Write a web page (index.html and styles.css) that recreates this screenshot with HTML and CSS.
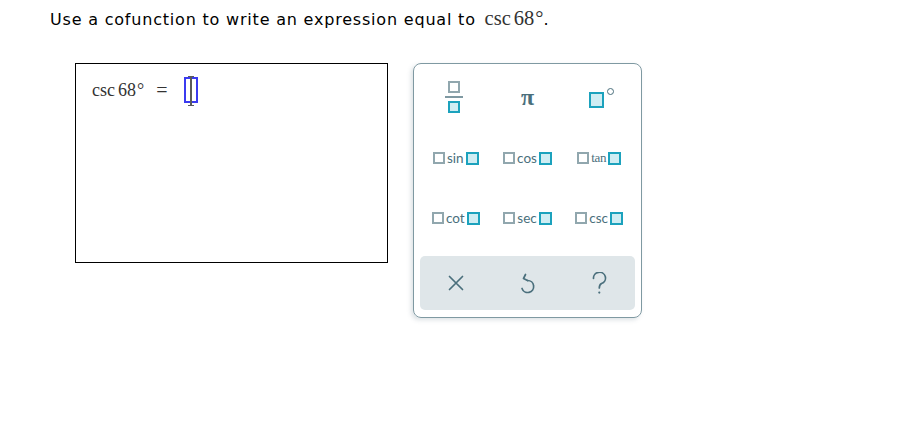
FILE: index.html
```html
<!DOCTYPE html>
<html>
<head>
<meta charset="utf-8">
<link rel="stylesheet" href="styles.css">
</head>
<body>
<div class="question">Use a cofunction to write an expression equal to <span class="math q-math">csc<span class="sp"></span>68<span class="dg">°</span></span>.</div>
<div class="work">
  <div class="answer">
    <div class="expr">
      <span class="math a-math">csc<span class="sp"></span>68<span class="dg">°</span></span>
      <span class="math eq">=</span>
      <span class="cursor-box"><span class="caret"></span></span>
    </div>
  </div>
  <div class="palette">
    <div class="grid">
      <div class="key">
        <span class="frac"><span class="bx gray"></span><span class="bar"></span><span class="bx teal"></span></span>
      </div>
      <div class="key"><span class="pi">π</span></div>
      <div class="key"><span class="deg"><span class="bx teal big"></span><span class="ring"></span></span></div>

      <div class="key"><span class="fn"><span class="bx gray"></span><span class="lbl">sin</span><span class="bx teal"></span></span></div>
      <div class="key"><span class="fn"><span class="bx gray"></span><span class="lbl">cos</span><span class="bx teal"></span></span></div>
      <div class="key"><span class="fn"><span class="bx gray"></span><span class="lbl tan">tan</span><span class="bx teal"></span></span></div>

      <div class="key"><span class="fn"><span class="bx gray"></span><span class="lbl">cot</span><span class="bx teal"></span></span></div>
      <div class="key"><span class="fn"><span class="bx gray"></span><span class="lbl">sec</span><span class="bx teal"></span></span></div>
      <div class="key"><span class="fn"><span class="bx gray"></span><span class="lbl">csc</span><span class="bx teal"></span></span></div>
    </div>
    <div class="actions">
      <span class="act">
        <svg width="16" height="16" viewBox="0 0 16 16"><path d="M1.5 1.5 L14.5 14.5 M14.5 1.5 L1.5 14.5" stroke="#4a6f7c" stroke-width="1.7" fill="none" stroke-linecap="round"/></svg>
      </span>
      <span class="act">
        <svg width="15" height="21" viewBox="0 0 15 21"><path d="M7.5 7.5 A6 6 0 1 1 2 15.5" stroke="#4a6f7c" stroke-width="1.7" fill="none" stroke-linecap="round"/><path d="M5.5 1.5 L3.5 5.5 L7.5 7.5" stroke="#4a6f7c" stroke-width="1.7" fill="none" stroke-linecap="round" stroke-linejoin="round"/></svg>
      </span>
      <span class="act">
        <svg width="15" height="23" viewBox="0 0 15 23"><path d="M1.5 6.5 A6 5.8 0 1 1 9.5 11.5 C8 12.3 7.3 13.5 7.3 16" stroke="#4a6f7c" stroke-width="1.7" fill="none" stroke-linecap="round"/><circle cx="7.3" cy="20.6" r="1.1" fill="#4a6f7c"/></svg>
      </span>
    </div>
  </div>
</div>
</body>
</html>
```
FILE: styles.css
```css
html, body { margin: 0; padding: 0; background: #fff; }
body { width: 913px; height: 444px; overflow: hidden; }

.question {
  font-family: "DejaVu Sans", Verdana, sans-serif;
  font-size: 16px;
  letter-spacing: 0.8px;
  color: #000;
  padding: 7px 0 0 50px;
  height: 27px;
  line-height: 22px;
}
.math {
  font-family: "Liberation Serif", "DejaVu Serif", "Times New Roman", serif;
  letter-spacing: 0;
}
.q-math { font-size: 20.5px; margin-left: 3px; color: #333; }
.sp { display: inline-block; width: 3px; }
.dg { margin-left: 1px; }

.work {
  display: flex;
  align-items: flex-start;
  padding: 29px 0 0 75px;
  gap: 25px;
}

.answer {
  width: 311px;
  height: 198px;
  border: 1px solid #000;
}
.expr {
  display: flex;
  align-items: center;
  padding: 13px 0 0 16px;
}
.a-math { font-size: 18px; color: #333; }
.eq { font-size: 20px; margin: 0 17px 0 12px; color: #333; }
.cursor-box {
  position: relative;
  width: 14px;
  height: 26px;
  border: 2px solid #3b3bf0;
  box-sizing: border-box;
  display: inline-block;
}
.caret {
  position: absolute;
  left: 4px;
  top: -3px;
  width: 2px;
  height: 30px;
  background: #5a5a5a;
}
.caret::before, .caret::after {
  content: "";
  position: absolute;
  left: -2px;
  width: 6px;
  height: 1px;
  background: #5a5a5a;
}
.caret::before { top: 0; }
.caret::after { bottom: 0; }

.palette {
  width: 215px;
  height: 246px;
  border: 1px solid #7f99a2;
  border-radius: 8px;
  box-shadow: -2px 2px 4px rgba(120,140,150,0.25);
  display: flex;
  flex-direction: column;
  padding: 0 6px 7px 6px;
}

.grid {
  display: grid;
  grid-template-columns: repeat(3, 1fr);
  grid-template-rows: 64px 60px 60px;
}
.key {
  display: flex;
  align-items: center;
  justify-content: center;
}

.bx {
  display: inline-block;
  width: 12px;
  height: 12px;
  box-sizing: border-box;
  border: 2px solid;
  flex: none;
}
.bx.gray { border-color: #91a7ae; background: #fff; }
.bx.teal { border-color: #1ca2bd; background: #cfedf3; width: 13px; height: 13px; }
.bx.big { width: 15px; height: 16px; }

.frac {
  display: flex;
  flex-direction: column;
  align-items: center;
  gap: 3px;
  margin-left: -4px;
  margin-top: 2px;
}
.frac .bx.teal { width: 12px; height: 12px; }
.frac .bar { width: 18px; height: 2px; background: #7f99a2; }

.pi {
  font-family: "Liberation Serif", "DejaVu Serif", serif;
  font-size: 24px;
  font-weight: bold;
  line-height: 25px;
  color: #4a6f7c;
  margin-top: 2px;
}

.deg { position: relative; display: inline-block; margin-left: -6px; margin-top: 8px; height: 16px; }
.ring {
  position: absolute;
  left: 18px;
  top: -4px;
  width: 5px;
  height: 5px;
  border: 1px solid #4a6f7c;
  border-radius: 50%;
}

.fn {
  display: flex;
  align-items: center;
  gap: 2px;
  font-family: Lato, "Open Sans", sans-serif;
  font-size: 13.5px;
  color: #4a6f7c;
}
.fn .lbl { line-height: 14px; margin-top: -1px; }
.fn .lbl.tan { font-family: "Liberation Serif", "DejaVu Serif", serif; font-size: 13px; letter-spacing: -0.3px; }

.actions {
  margin-top: auto;
  height: 54px;
  background: #dfe6e9;
  border-radius: 5px;
  display: grid;
  grid-template-columns: repeat(3, 1fr);
  align-items: center;
  justify-items: center;
}
.act { display: flex; align-items: center; justify-content: center; }
.act svg { display: block; }
```
